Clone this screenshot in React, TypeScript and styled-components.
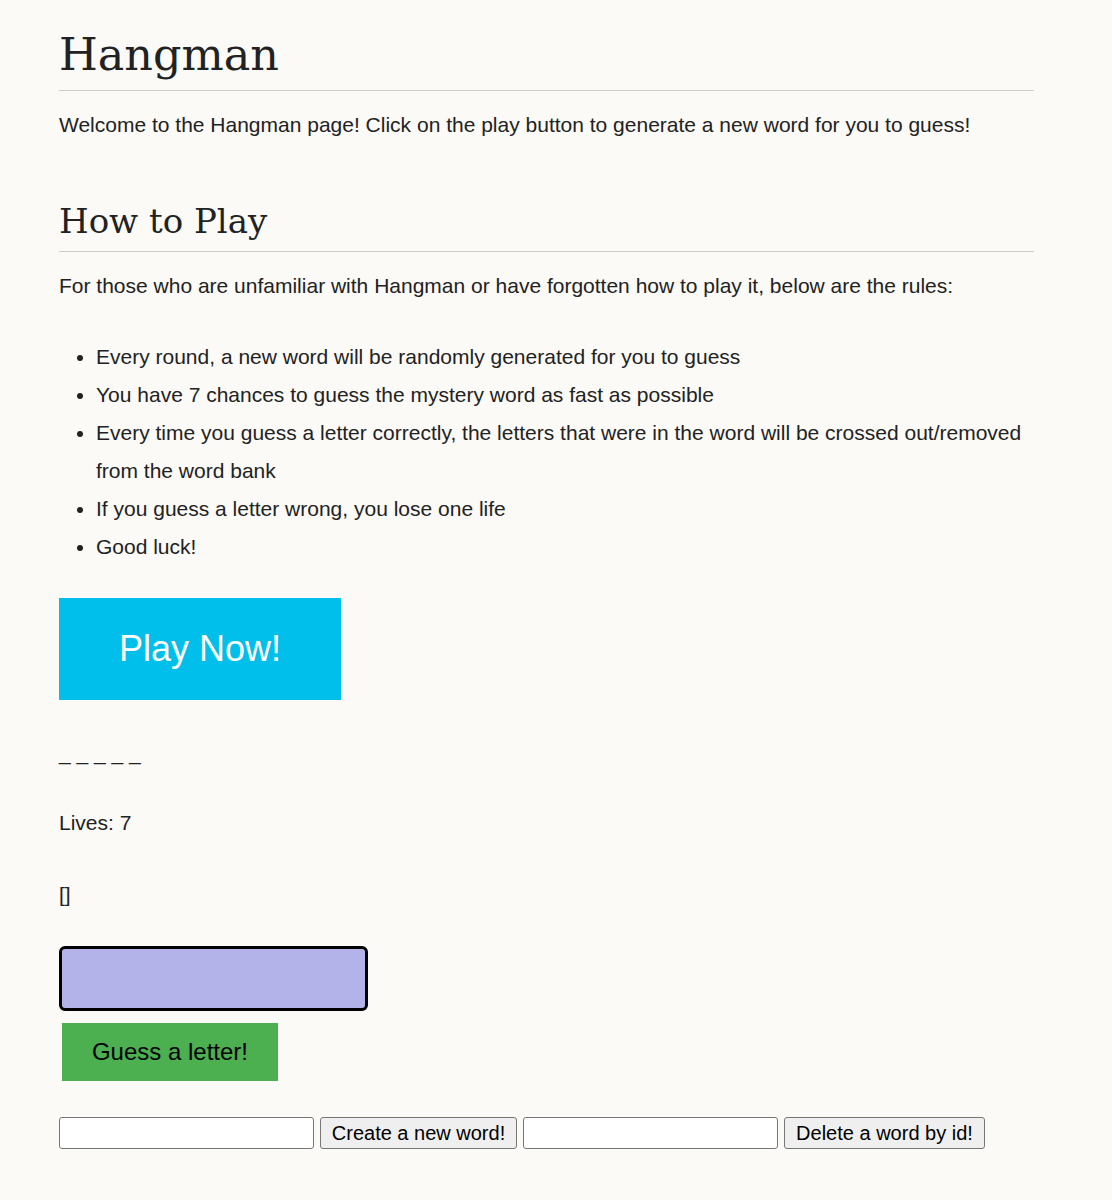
import React from "react";
import styled, { createGlobalStyle } from "styled-components";

const Global = createGlobalStyle`
  html, body { margin: 0; padding: 0; background: #fbfaf7; }
  body { font-family: "Liberation Sans", Arial, sans-serif; color: #222; }
`;

const Page = styled.main`
  width: 975px;
  margin-left: 59px;
  padding-top: 29px;
  padding-bottom: 40px;
`;

const Title = styled.h1<{ $size: number; $line: number; $top: number; $pad: number }>`
  font-family: "DejaVu Serif", "Liberation Serif", serif;
  font-weight: 400;
  font-size: ${(p) => p.$size}px;
  line-height: ${(p) => p.$line}px;
  color: #222;
  margin: ${(p) => p.$top}px 0 0;
  padding-bottom: ${(p) => p.$pad}px;
  border-bottom: 1px solid #ccc;
`;

const Text = styled.p<{ $top?: number }>`
  font-size: 21px;
  line-height: 38px;
  margin: ${(p) => p.$top ?? 15}px 0 0;
`;

const Rules = styled.ul`
  margin: 33px 0 0;
  padding-left: 37px;
  font-size: 21px;
  line-height: 38px;
`;

const PlayButton = styled.button`
  display: block;
  margin-top: 32px;
  width: 282px;
  height: 102px;
  border: none;
  background: #00bfea;
  color: #fff;
  font-family: "Liberation Sans", Arial, sans-serif;
  font-size: 36px;
  cursor: pointer;
`;

const LetterBox = styled.input`
  display: block;
  box-sizing: border-box;
  margin-top: 32px;
  width: 309px;
  height: 65px;
  background: #b3b3e9;
  border: 3px solid #000;
  border-radius: 6px;
  font-size: 20px;
`;

const GuessButton = styled.button`
  display: block;
  margin: 12px 0 0 3px;
  width: 216px;
  height: 58px;
  border: none;
  background: #4caf50;
  color: #000;
  font-family: "Liberation Sans", Arial, sans-serif;
  font-size: 24px;
  cursor: pointer;
`;

const AdminRow = styled.div`
  display: flex;
  gap: 6px;
  margin-top: 36px;
`;

const Field = styled.input`
  box-sizing: border-box;
  width: 255px;
  height: 32px;
  background: #fff;
  border: 1px solid #767676;
  border-radius: 3px;
  font-size: 20px;
  font-family: "Liberation Sans", Arial, sans-serif;
`;

const SmallButton = styled.button<{ $w: number }>`
  box-sizing: border-box;
  width: ${(p) => p.$w}px;
  height: 32px;
  background: #efefef;
  border: 1px solid #767676;
  border-radius: 3px;
  color: #000;
  font-size: 20px;
  font-family: "Liberation Sans", Arial, sans-serif;
  padding: 0;
`;

export default function App() {
  return (
    <>
      <Global />
      <Page>
        <Title $size={44.5} $line={52} $top={0} $pad={9}>Hangman</Title>
        <Text $top={15}>
          Welcome to the Hangman page! Click on the play button to generate a new word for you to guess!
        </Text>
        <Title as="h2" $size={34} $line={40} $top={57} $pad={10}>How to Play</Title>
        <Text $top={15}>
          For those who are unfamiliar with Hangman or have forgotten how to play it, below are the rules:
        </Text>
        <Rules>
          <li>Every round, a new word will be randomly generated for you to guess</li>
          <li>You have 7 chances to guess the mystery word as fast as possible</li>
          <li>
            Every time you guess a letter correctly, the letters that were in the word will be crossed out/removed
            from the word bank
          </li>
          <li>If you guess a letter wrong, you lose one life</li>
          <li>Good luck!</li>
        </Rules>
        <PlayButton>Play Now!</PlayButton>
        <Text $top={34}>_ _ _ _ _</Text>
        <Text $top={32}>Lives: 7</Text>
        <Text $top={34}>[]</Text>
        <LetterBox type="text" />
        <GuessButton>Guess a letter!</GuessButton>
        <AdminRow>
          <Field type="text" />
          <SmallButton $w={197}>Create a new word!</SmallButton>
          <Field type="text" />
          <SmallButton $w={201}>Delete a word by id!</SmallButton>
        </AdminRow>
      </Page>
    </>
  );
}
